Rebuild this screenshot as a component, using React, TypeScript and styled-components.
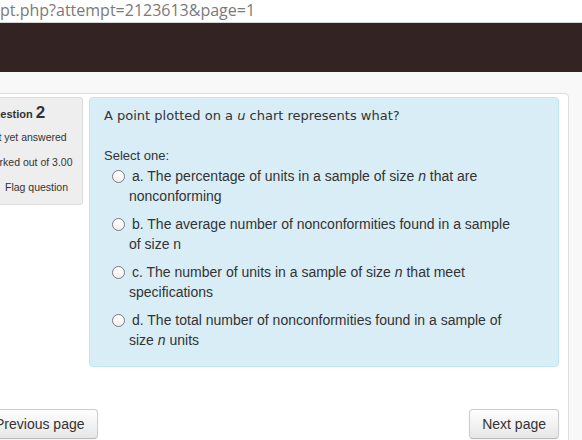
import React from "react";
import styled, {createGlobalStyle} from "styled-components";

const GlobalStyle = createGlobalStyle`
  html, body {
    margin: 0;
    padding: 0;
    background: #f8f8f8;
    overflow: hidden;
  }
  body {
    font-family: "Liberation Sans", Arial, sans-serif;
    color: #333;
  }
`;

const UrlBar = styled.div`
  height: 22px;
  background: #fff;
  border-bottom: 1px solid #d6d6d6;
  font-family: "Open Sans", "Noto Sans", sans-serif;
  font-size: 16px;
  line-height: 20px;
  color: #7a7a7a;
  white-space: nowrap;
  overflow: hidden;
`;

const NavBar = styled.div`
  height: 49px;
  background: #332423;
`;

const Body = styled.div`
  padding-top: 21px;
`;

const Panel = styled.div`
  margin-left: -34px;
  margin-right: 13px;
  height: 360px;
  background: #fff;
  border: 1px solid #ddd;
  border-radius: 4px;
  padding: 3px 9px 0 7px;
`;

const QuestionRow = styled.div`
  display: flex;
  align-items: flex-start;
  gap: 6px;
`;

const InfoBox = styled.div`
  width: 91px;
  flex: none;
  background: #eee;
  border: 1px solid #dcdcdc;
  border-radius: 3px;
  padding: 4px 6px 4px 10px;
  font-size: 10.5px;
  color: #333;
`;

const InfoLine = styled.div<{$indent?: number}>`
  line-height: 25px;
  padding-left: ${p => p.$indent || 0}px;
  white-space: nowrap;
`;

const QNo = styled.div`
  font-weight: bold;
  font-size: 11px;
  line-height: 21px;
  white-space: nowrap;

  span {
    font-size: 17px;
  }
`;

const Content = styled.div`
  flex: 1;
  background: #d9edf7;
  border: 1px solid #bce8f1;
  border-radius: 4px;
  padding: 8px 14px 16px 14px;
  color: #333;
`;

const QText = styled.div`
  font-family: "DejaVu Sans", Verdana, sans-serif;
  font-size: 13px;
  line-height: 20px;
  margin-bottom: 20px;
  color: #333;
`;

const Prompt = styled.div`
  font-size: 13px;
  line-height: 20px;
`;

const Options = styled.div`
  display: flex;
  flex-direction: column;
  gap: 8px;
  padding-left: 8px;
`;

const Option = styled.div`
  display: flex;
  align-items: flex-start;
  font-size: 14px;
  line-height: 20px;
`;

const Radio = styled.span`
  flex: none;
  width: 11px;
  height: 11px;
  margin-top: 4px;
  margin-right: 4px;
  border: 1px solid #7b7b7b;
  border-radius: 50%;
  background: linear-gradient(#fff, #f0f0f0);
`;

const Label = styled.div`
  width: 390px;

  .lead {
    padding-left: 3px;
  }
`;

const ButtonRow = styled.div`
  display: flex;
  justify-content: space-between;
  margin-top: 42px;
  padding-left: 8px;
`;

const Button = styled.button`
  font-family: "Liberation Sans", Arial, sans-serif;
  font-size: 14px;
  color: #333;
  height: 30px;
  padding: 0 12px;
  border: 1px solid #ccc;
  border-bottom-color: #b8b8b8;
  border-radius: 4px;
  background: linear-gradient(#fff, #e6e6e6);
  box-shadow: inset 0 1px 0 rgba(255, 255, 255, 0.2), 0 1px 2px rgba(0, 0, 0, 0.05);
`;

const options = [
  <>a. The percentage of units in a sample of size <i>n</i> that are nonconforming</>,
  <>b. The average number of nonconformities found in a sample of size n</>,
  <>c. The number of units in a sample of size <i>n</i> that meet specifications</>,
  <>d. The total number of nonconformities found in a sample of size <i>n</i> units</>,
];

export default function App() {
  return (
    <>
      <GlobalStyle />
      <UrlBar>pt.php?attempt=2123613&amp;page=1</UrlBar>
      <NavBar />
      <Body>
        <Panel>
          <QuestionRow>
            <InfoBox>
              <QNo>Question <span>2</span></QNo>
              <InfoLine>Not yet answered</InfoLine>
              <InfoLine>Marked out of 3.00</InfoLine>
              <InfoLine $indent={20}>Flag question</InfoLine>
            </InfoBox>
            <Content>
              <QText>A point plotted on a <i>u</i> chart represents what?</QText>
              <Prompt>Select one:</Prompt>
              <Options>
                {options.map((o, i) => (
                  <Option key={i}>
                    <Radio />
                    <Label><span className="lead">{o}</span></Label>
                  </Option>
                ))}
              </Options>
            </Content>
          </QuestionRow>
          <ButtonRow>
            <Button>Previous page</Button>
            <Button>Next page</Button>
          </ButtonRow>
        </Panel>
      </Body>
    </>
  );
}
